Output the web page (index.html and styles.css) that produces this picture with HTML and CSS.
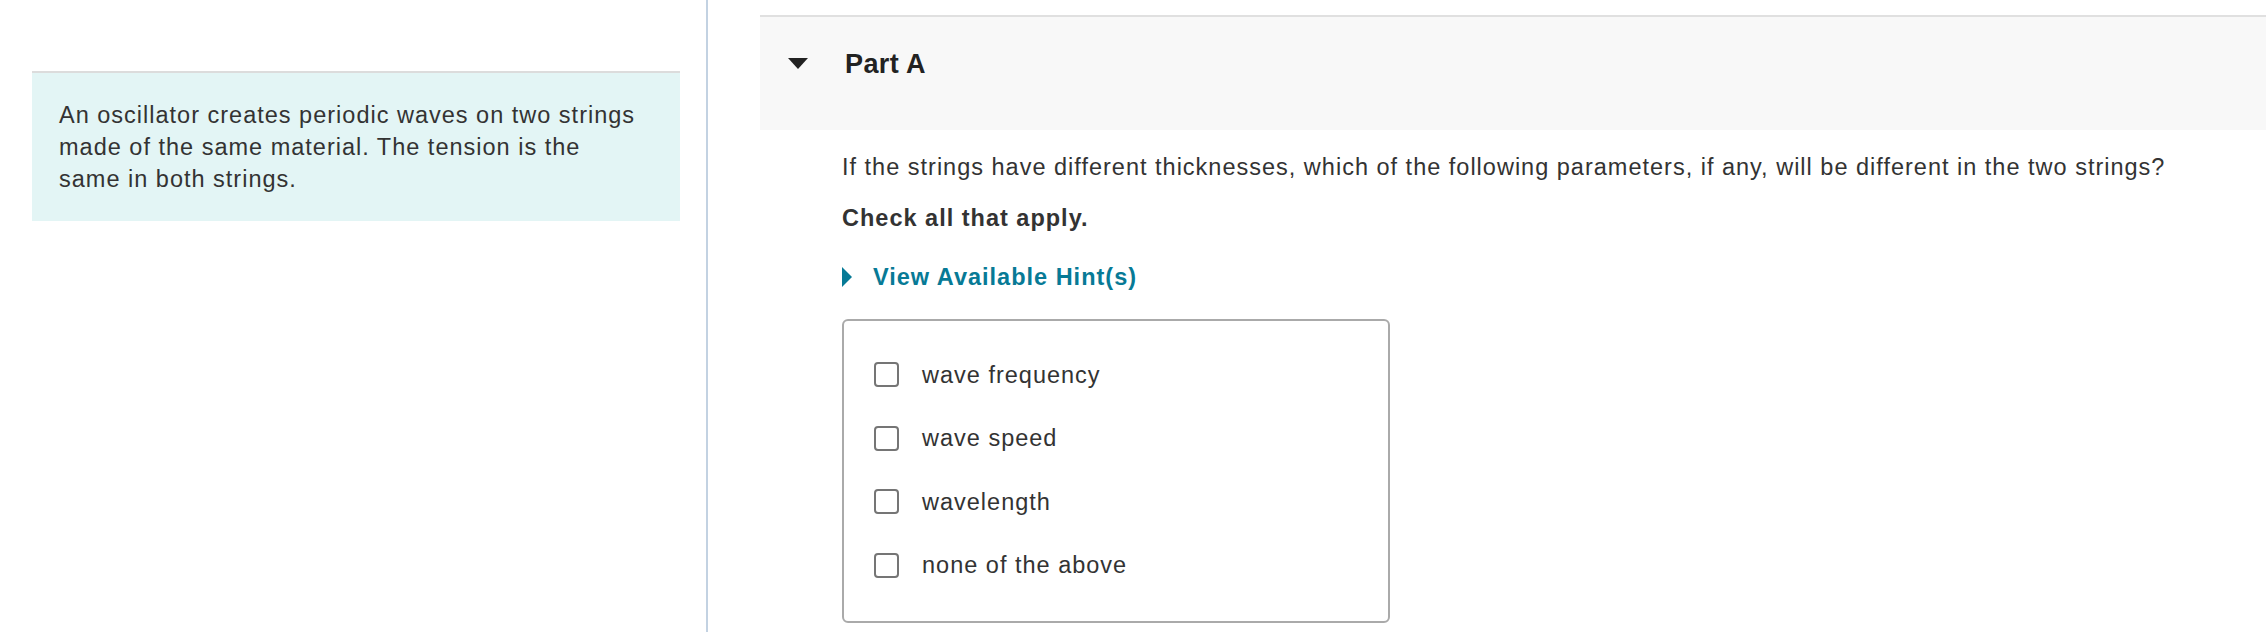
FILE: index.html
```html
<!DOCTYPE html>
<html lang="en">
<head>
<meta charset="utf-8">
<title>Part A</title>
<link rel="stylesheet" href="styles.css">
</head>
<body>
<div class="page">
  <aside class="intro">
    <div class="intro-box">
      <p>An oscillator creates periodic waves on two strings made of the same material. The tension is the same in both strings.</p>
    </div>
  </aside>
  <div class="divider"></div>
  <main class="part">
    <div class="part-header">
      <span class="caret-down"></span>
      <h2 class="part-title">Part A</h2>
    </div>
    <div class="part-body">
      <p class="question">If the strings have different thicknesses, which of the following parameters, if any, will be different in the two strings?</p>
      <p class="instruction">Check all that apply.</p>
      <div class="hint"><span class="caret-right"></span><span class="hint-text">View Available Hint(s)</span></div>
      <div class="options">
        <label class="option"><span class="checkbox"></span><span class="option-text">wave frequency</span></label>
        <label class="option"><span class="checkbox"></span><span class="option-text">wave speed</span></label>
        <label class="option"><span class="checkbox"></span><span class="option-text">wavelength</span></label>
        <label class="option"><span class="checkbox"></span><span class="option-text">none of the above</span></label>
      </div>
    </div>
  </main>
</div>
</body>
</html>
```

FILE: styles.css
```css
html, body {
  margin: 0;
  padding: 0;
  background: #ffffff;
  font-family: "Liberation Sans", Arial, Helvetica, sans-serif;
  color: #333333;
}

.page {
  display: flex;
  height: 632px;
  overflow: hidden;
}

.intro {
  flex: none;
  width: 648px;
  margin-left: 32px;
  padding-top: 71px;
}

.intro-box {
  background: #e3f5f5;
  border-top: 2px solid #dcdcdc;
  padding: 26px 38px 26px 27px;
  font-size: 23.5px;
  line-height: 32px;
  letter-spacing: 1px;
}

.intro-box p {
  margin: 0;
}

.divider {
  flex: none;
  width: 2px;
  margin-left: 26px;
  background: #c3d2e2;
}

.part {
  flex: 1;
  padding-left: 52px;
  padding-top: 15px;
}

.part-header {
  display: flex;
  align-items: center;
  background: #f8f8f8;
  border-top: 2px solid #e0e0e0;
  padding: 31px 0 50px 28px;
}

.caret-down {
  flex: none;
  width: 0;
  height: 0;
  border-left: 10.5px solid transparent;
  border-right: 10.5px solid transparent;
  border-top: 11px solid #222222;
  margin-right: 37px;
  position: relative;
  top: -1px;
}

.part-title {
  margin: 0;
  font-size: 27px;
  line-height: 32px;
  font-weight: bold;
  letter-spacing: 0.4px;
  color: #222222;
}

.part-body {
  padding-left: 82px;
  padding-top: 21px;
}

.question {
  margin: 0;
  font-size: 23.5px;
  line-height: 32px;
  letter-spacing: 1px;
}

.instruction {
  margin: 19px 0 0;
  font-size: 23.5px;
  line-height: 32px;
  font-weight: bold;
  letter-spacing: 1px;
}

.hint {
  display: flex;
  align-items: center;
  margin-top: 27px;
  color: #077a96;
  font-size: 23.5px;
  line-height: 32px;
  font-weight: bold;
  letter-spacing: 1px;
}

.caret-right {
  flex: none;
  width: 0;
  height: 0;
  border-top: 10px solid transparent;
  border-bottom: 10px solid transparent;
  border-left: 10px solid #077a96;
  margin-right: 21px;
}

.options {
  box-sizing: border-box;
  width: 548px;
  margin-top: 26px;
  border: 2px solid #aaaaaa;
  border-radius: 6px;
  padding: 22px 30px 24px;
}

.option {
  display: flex;
  align-items: center;
  height: 63.5px;
  font-size: 23.5px;
  line-height: 32px;
  letter-spacing: 1px;
}

.checkbox {
  flex: none;
  box-sizing: border-box;
  width: 25px;
  height: 25px;
  border: 2px solid #757575;
  border-radius: 4px;
  background: #ffffff;
  margin-right: 23px;
}
```
